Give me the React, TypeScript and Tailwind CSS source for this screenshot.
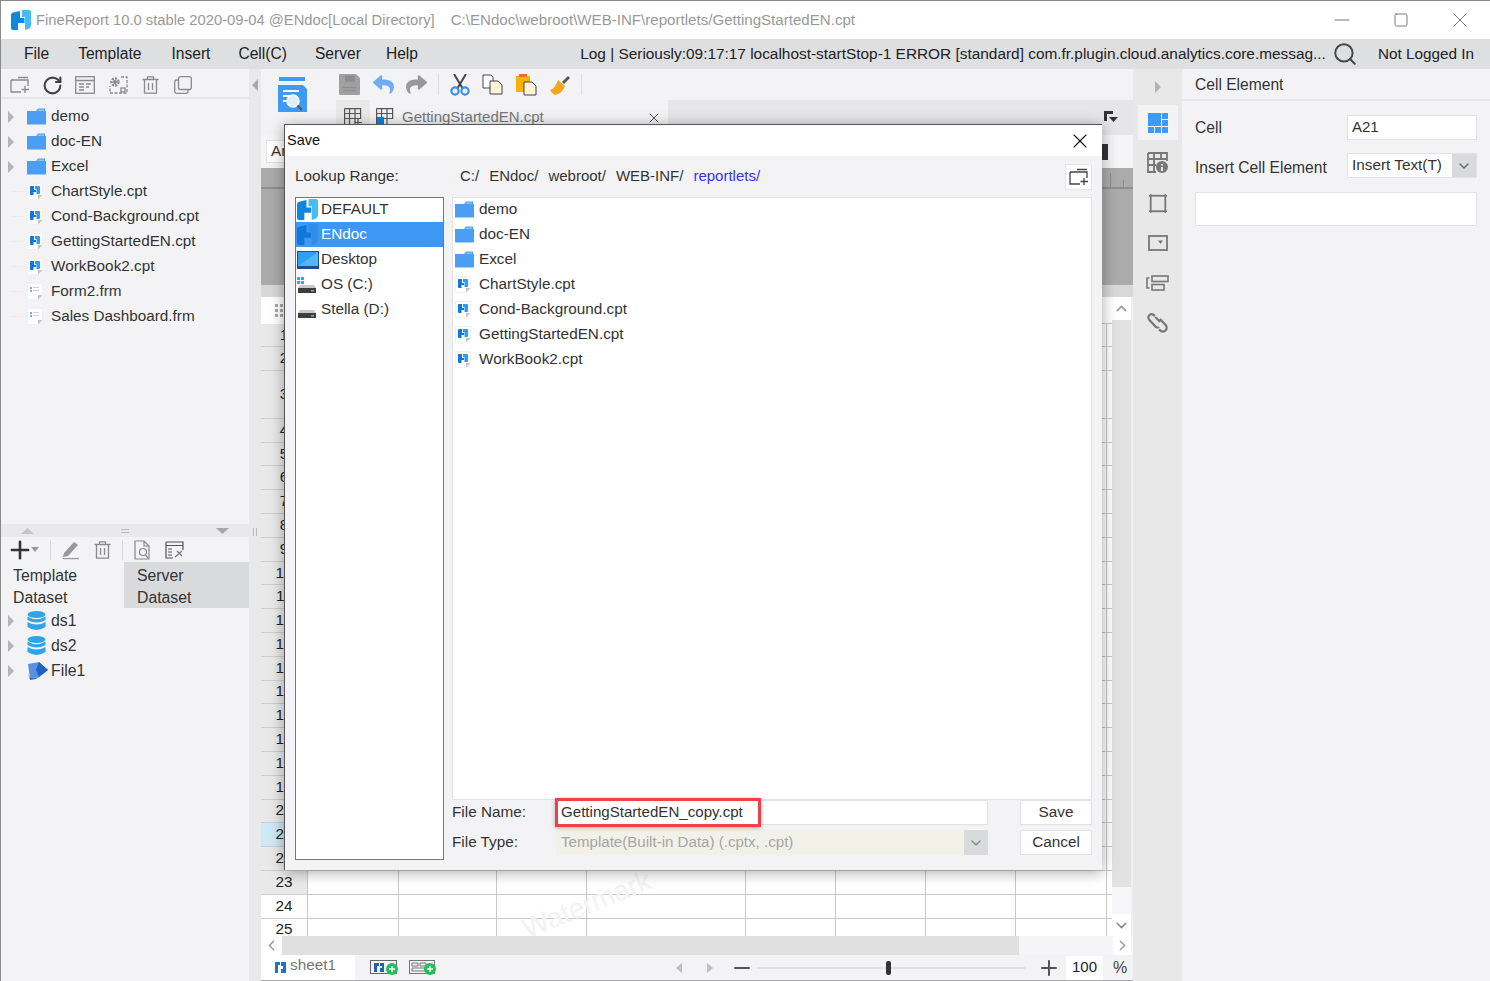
import { RotateCw, Search, Plus, Minus, X, ChevronDown, ChevronUp, ChevronLeft, ChevronRight, Square } from "lucide-react"
import { FaReply, FaShare } from "react-icons/fa"

function Logo({ size = 20, dim = false }: { size?: number; dim?: boolean }) {
  return (
    <svg width={size} height={size} viewBox="0 0 20 20" className="shrink-0">
      <path d="M11 0 H18 Q20 0 20 2 V15 Q20 18 17 19 L14 20 V7 H11 Z" fill={dim ? "#2f8fe8" : "#45bdf0"} />
      <path d="M0 5 Q0 3 2 2.500 L9 1 V8 H13.500 V13 H7 V20 H2 Q0 20 0 18 Z" fill={dim ? "#0f78d8" : "#0f86e0"} />
    </svg>
  )
}

function FolderIcon() {
  return (
    <svg width="19" height="17" viewBox="0 0 19 17" className="shrink-0">
      <path d="M0 3 H9 L11 0.5 H18 V3 H19 V16 Q19 16.5 18 16.5 H1 Q0 16.500 0 16 Z" fill="#4a9ff5" />
      <path d="M10 3 L11.5 1.5 H17 V3 Z" fill="#8cc4fa" />
    </svg>
  )
}

function PageIcon({ form = false }: { form?: boolean }) {
  return (
    <svg width="16" height="17" viewBox="0 0 16 17" className="shrink-0">
      <path d="M0.500 0.500 H15.500 V12 L11 16.500 H0.500 Z" fill="#fff" stroke="#f0f0f0" />
      <path d="M11 16.500 V12 H15.500 Z" fill="#c4c4c4" />
      {form ? (
        <g fill="#c3d4e3">
          <rect x="3" y="4" width="2" height="2" fill="#6fb2f5" />
          <rect x="6" y="4" width="6" height="1" />
          <rect x="3" y="7" width="2" height="2" fill="#6fb2f5" />
          <rect x="6" y="7" width="6" height="1" />
        </g>
      ) : (
        <g>
          <path d="M3 4 Q3 3 4 3 H7 V7 H9 V9 H6.500 V12 H4 Q3 12 3 11 Z" fill="#1278d8" />
          <path d="M8 3 H12 Q13 3 13 4 V10 Q13 11 12 11 H9.500 V6 H8 Z" fill="#2b9cf0" />
        </g>
      )}
    </svg>
  )
}

function Arrow() {
  return (
    <svg width="6" height="12" viewBox="0 0 6 12" className="shrink-0">
      <path d="M0 0 L6 6 L0 12 Z" fill="#b4b4b4" />
    </svg>
  )
}

function DbIcon() {
  return (
    <svg width="19" height="20" viewBox="0 0 19 20" className="shrink-0">
      <ellipse cx="9.5" cy="3.5" rx="9" ry="3.5" fill="#2fa4e6" />
      <path d="M0.5 5.5 Q9.5 11 18.5 5.5 V9 Q9.5 14 0.5 9 Z" fill="#2fa4e6" />
      <path d="M0.5 11 Q9.5 16 18.5 11 V16 Q9.5 22 0.5 16 Z" fill="#2fa4e6" />
    </svg>
  )
}

function FileBlockIcon() {
  return (
    <svg width="22" height="18" viewBox="0 0 22 18" className="shrink-0">
      <path d="M1 2 L12 0 L21 8 L12 15 L3 16 Z" fill="#5b8fe0" />
      <path d="M12 0 L21 8 L12 15 L9 8 Z" fill="#1f62c4" />
      <path d="M1 11 L3 16 L12 15 L9 17 L3 18 Z" fill="#2f6ec8" />
    </svg>
  )
}

function HardDrive({ win = false }: { win?: boolean }) {
  return (
    <svg width="20" height="18" viewBox="0 0 20 18" className="shrink-0">
      {win && (
        <g fill="#1fb0f0">
          <rect x="0" y="1" width="3" height="3" />
          <rect x="4" y="1" width="3" height="3" />
          <rect x="0" y="5" width="3" height="3" />
          <rect x="4" y="5" width="3" height="3" />
        </g>
      )}
      <path d="M3 9 H17 L19 12 H1 Z" fill="#c9c9c9" />
      <rect x="1" y="12" width="18" height="5" fill="#3d3d3d" />
      <rect x="14" y="14" width="3" height="1.5" fill="#4fd05a" />
    </svg>
  )
}

function DesktopIcon() {
  return (
    <svg width="22" height="18" viewBox="0 0 22 18" className="shrink-0">
      <rect x="0" y="0" width="22" height="18" fill="#1e4f8a" />
      <rect x="1" y="1" width="20" height="14" fill="#2ea0f2" />
      <path d="M1 15 L21 1 V15 Z" fill="#52b6fa" />
    </svg>
  )
}

function SaveFilled() {
  return (
    <svg width="21" height="21" viewBox="0 0 21 21">
      <path d="M1 0 H17 L21 4 V20 Q21 21 20 21 H1 Q0 21 0 20 V1 Q0 0 1 0 Z" fill="#a0a0a0" />
      <rect x="6" y="1.500" width="10" height="6" fill="#8c8c8c" />
      <rect x="4" y="13" width="13" height="1.200" fill="#8c8c8c" />
      <rect x="4" y="16" width="13" height="1.200" fill="#8c8c8c" />
    </svg>
  )
}

function NewFolderOutline() {
  return (
    <svg width="20" height="18" viewBox="0 0 20 18" fill="none" stroke="currentColor" strokeWidth="1.3">
      <path d="M1 4 H18 V10 M1 4 V16 H11" />
      <path d="M8 1.5 H18 M15 10 V17 M11.5 13.5 H19" />
    </svg>
  )
}

function ListBoxIcon() {
  return (
    <svg width="20" height="18" viewBox="0 0 20 18" fill="none" stroke="#8a8a8a" strokeWidth="1.3">
      <rect x="0.7" y="0.7" width="18.6" height="16.6" />
      <path d="M1 4.5 H19 M4 8 H9 M4 11 H9 M4 14 H9 M11 8 H16 M11 11 H14" />
    </svg>
  )
}

function GearIcon() {
  return (
    <svg width="20" height="18" viewBox="0 0 20 18" fill="none" stroke="#8a8a8a" strokeWidth="1.3">
      <path d="M13 1 H19 V17 H2 V10" strokeDasharray="3 1.5" />
      <circle cx="7" cy="6" r="3.5" strokeWidth="2.4" strokeDasharray="2 1.2" />
      <circle cx="7" cy="6" r="1.4" fill="#8a8a8a" />
      <rect x="13" y="12" width="4" height="4" />
    </svg>
  )
}

function TrashIcon() {
  return (
    <svg width="17" height="18" viewBox="0 0 17 18" fill="none" stroke="#8a8a8a" strokeWidth="1.3">
      <path d="M0.5 3.5 H16.5 M5.5 3.5 V0.8 H11.5 V3.5 M2.5 3.5 V17.2 H14.5 V3.5 M6.5 7 V14 M10.5 7 V14" />
    </svg>
  )
}

function CopyOutline() {
  return (
    <svg width="18" height="18" viewBox="0 0 18 18" fill="none" stroke="#8a8a8a" strokeWidth="1.3">
      <rect x="4.5" y="0.7" width="12.8" height="12.8" rx="2" />
      <path d="M4.5 4 H2.5 Q0.7 4 0.7 6 V15.5 Q0.7 17.3 2.5 17.3 H12 Q14 17.3 14 15.5 V13.5" />
    </svg>
  )
}

function ReportIcon() {
  return (
    <svg width="29" height="36" viewBox="0 0 29 36">
      <rect x="1" y="0" width="26" height="4" fill="#3d9bf5" />
      <path d="M0 8 H25 L29 12 V35 H0 Z" fill="#3d9bf5" />
      <path d="M5 13 H21 V15 H5 Z M5 18 H12 V20 H5 Z M5 23 H9 V25 H5 Z" fill="#fff" />
      <circle cx="15" cy="24" r="6" fill="#dceefc" stroke="#fff" strokeWidth="1.5" />
      <path d="M19.5 28.5 L24 33" stroke="#555" strokeWidth="2" />
    </svg>
  )
}

function ScissorsIcon() {
  return (
    <svg width="20" height="22" viewBox="0 0 20 22" fill="none">
      <path d="M4 0 L13 15 M16 0 L7 15" stroke="#444" strokeWidth="2" />
      <circle cx="5" cy="17" r="3.6" stroke="#3d8ee8" strokeWidth="2.2" />
      <circle cx="15" cy="17" r="3.6" stroke="#3d8ee8" strokeWidth="2.2" />
    </svg>
  )
}

function CopyDocs() {
  return (
    <svg width="21" height="21" viewBox="0 0 21 21">
      <path d="M1 1 H9 L11 3 V14 H1 Z" fill="#fff" stroke="#444" />
      <path d="M8 7 H16 L20 11 V20 H8 Z" fill="#fdf3d8" stroke="#444" />
    </svg>
  )
}

function PasteDocs() {
  return (
    <svg width="21" height="22" viewBox="0 0 21 22">
      <rect x="0" y="2" width="14" height="16" fill="#f5b400" />
      <rect x="3" y="0" width="8" height="3" fill="#e86a3a" />
      <path d="M8 8 H16 L20 12 V21 H8 Z" fill="#fdf3d8" stroke="#444" />
    </svg>
  )
}

function BroomIcon() {
  return (
    <svg width="20" height="20" viewBox="0 0 20 20">
      <path d="M12 7 L18 1 L20 3 L14 9 Z" fill="#555" />
      <path d="M8 5 L15 11 Q13 18 5 20 Q2 19 0 15 Q5 14 8 5 Z" fill="#f0a820" />
    </svg>
  )
}

function GridPlus({ mark = false }: { mark?: boolean }) {
  return (
    <svg width="18" height="18" viewBox="0 0 18 18" fill="none" stroke="#555" strokeWidth="1.2">
      <path d="M0.6 0.6 H16.6 V11 M0.6 0.6 V16.6 H9 M0.6 5.5 H16.6 M0.6 10.5 H16.6 M5.5 0.6 V16.6 M11 0.6 V16.6" />
      {mark ? <rect x="1" y="9" width="7" height="8" fill="#1280dc" stroke="none" /> : <path d="M14 11 V18 M10.5 14.5 H18" />}
    </svg>
  )
}

function SidebarIcons() {
  return (
    <div className="w-[49px] shrink-0 bg-[#e8e8e8] flex flex-col items-center">
      <div className="h-[36px] flex items-center justify-center">
        <Arrow />
      </div>
      <div className="w-[40px] h-[35px] bg-[#f3f3f5] flex items-center justify-center">
        <svg width="20" height="20" viewBox="0 0 20 20" fill="#3d9bf5">
          <rect x="0" y="0" width="13" height="13" />
          <rect x="14" y="0" width="6" height="6" />
          <rect x="14" y="7" width="6" height="6" />
          <rect x="0" y="14" width="6" height="6" />
          <rect x="7" y="14" width="6" height="6" />
          <rect x="14" y="14" width="6" height="6" />
        </svg>
      </div>
      <div className="mt-[3px] flex flex-col items-center">
        <div className="h-[40px] flex items-center">
          <svg width="21" height="22" viewBox="0 0 21 22" fill="none" stroke="#777" strokeWidth="1.8">
            <path d="M1 1 H20 V9 M1 1 V20 H9 M1 7 H20 M1 13 H9 M7 1 V20 M14 1 V8" />
            <circle cx="15" cy="15" r="6" fill="#777" stroke="none" />
            <path d="M15 12 V13.5 M15 15 V19" stroke="#fff" strokeWidth="1.6" />
          </svg>
        </div>
        <div className="h-[40px] flex items-center">
          <svg width="20" height="21" viewBox="0 0 20 23" fill="none" stroke="#777" strokeWidth="2">
            <rect x="2" y="3" width="16" height="17" />
            <path d="M0 3 H3 M17 3 H20 M0 20 H3 M17 20 H20 M2 1 V4 M18 1 V4 M2 19 V22 M18 19 V22" strokeWidth="1.4" />
          </svg>
        </div>
        <div className="h-[40px] flex items-center">
          <svg width="20" height="16" viewBox="0 0 20 16" fill="none" stroke="#777" strokeWidth="1.8">
            <rect x="1" y="1" width="18" height="14" />
            <path d="M10 5.5 H15 L12.5 9 Z" fill="#777" stroke="none" />
          </svg>
        </div>
        <div className="h-[40px] flex items-center">
          <svg width="23" height="16" viewBox="0 0 23 16" fill="none" stroke="#777" strokeWidth="1.6">
            <rect x="6" y="1" width="16" height="5.5" />
            <rect x="6" y="9.5" width="12" height="5.5" />
            <path d="M3.5 3 H1 V13 H3.5" />
          </svg>
        </div>
        <div className="h-[40px] flex items-center">
          <svg width="21" height="20" viewBox="0 0 21 20" fill="none" stroke="#777" strokeWidth="2.2">
            <path d="M8 3 L6 1.500 Q4 0.500 2.500 2 Q0.500 4 2 6.500 L9 14 Q11 15 12 14" />
            <path d="M13 6 L19 12.500 Q20.500 15.500 18.500 17.500 Q16.500 19.500 14 18 L12 16.500 M8 5 Q9 4.500 10 5.500 L13 9" />
          </svg>
        </div>
      </div>
    </div>
  )
}

const tree = [
  { name: "demo", kind: "folder" },
  { name: "doc-EN", kind: "folder" },
  { name: "Excel", kind: "folder" },
  { name: "ChartStyle.cpt", kind: "cpt" },
  { name: "Cond-Background.cpt", kind: "cpt" },
  { name: "GettingStartedEN.cpt", kind: "cpt" },
  { name: "WorkBook2.cpt", kind: "cpt" },
  { name: "Form2.frm", kind: "frm" },
  { name: "Sales Dashboard.frm", kind: "frm" },
]

function LeftPanel() {
  return (
    <div className="w-[248px] shrink-0 flex flex-col">
      <div className="flex-1">
        <div className="h-[30px] border-b-2 border-[#e6e6e8] flex items-center pt-[4px] pl-[3px] text-[#8a8a8a]">
          <div className="w-[32.500px] flex justify-center"><NewFolderOutline /></div>
          <div className="w-[32.500px] flex justify-center"><RotateCw size={21} strokeWidth={2.4} className="text-[#444]" /></div>
          <div className="w-[32.500px] flex justify-center"><ListBoxIcon /></div>
          <div className="w-[32.500px] flex justify-center"><GearIcon /></div>
          <div className="w-[32.500px] flex justify-center"><TrashIcon /></div>
          <div className="w-[32.500px] flex justify-center"><CopyOutline /></div>
        </div>
        <div className="pt-[5px]">
          {tree.map((t) => (
            <div key={t.name} className="h-[25px] flex items-center">
              <div className="w-[26px] pl-[7px] flex items-center">
                {t.kind === "folder" ? <Arrow /> : <div className="ml-[3px] w-[12px] h-px bg-[#ebebed]" />}
              </div>
              <div className="w-[24px] flex justify-start">
                {t.kind === "folder" ? <FolderIcon /> : <PageIcon form={t.kind === "frm"} />}
              </div>
              <span>{t.name}</span>
            </div>
          ))}
        </div>
      </div>
      <div className="h-[457px] shrink-0 flex flex-col">
        <div className="h-[13px] bg-[#e9e9eb] flex items-center justify-between px-[20px]">
          <svg width="13" height="6" viewBox="0 0 13 6"><path d="M0 6 L6.5 0 L13 6 Z" fill="#c4c4c4" /></svg>
          <div className="w-[8px] h-[4px] border-y border-[#bbb]" />
          <svg width="13" height="6" viewBox="0 0 13 6"><path d="M0 0 L6.5 6 L13 0 Z" fill="#a8a8a8" /></svg>
        </div>
        <div className="h-[25px] flex items-center pl-[8px]">
          <Plus size={28} strokeWidth={2.2} className="text-[#333] -mx-[3px]" />
          <svg width="8" height="5" viewBox="0 0 8 5"><path d="M0 0 H8 L4 5 Z" fill="#999" /></svg>
          <div className="w-px h-[20px] bg-[#d8d8d8] ml-[11px]" />
          <svg width="20" height="20" viewBox="0 0 20 20" className="ml-[10px]">
            <path d="M3 13 L13 2 L17 5 L7 16 L2 17 Z" fill="#999" />
            <rect x="2" y="18" width="16" height="1.2" fill="#999" />
          </svg>
          <div className="ml-[13px]"><TrashIcon /></div>
          <div className="w-px h-[20px] bg-[#d8d8d8] ml-[11px]" />
          <svg width="16" height="20" viewBox="0 0 16 20" fill="none" stroke="#888" strokeWidth="1.2" className="ml-[11px]">
            <path d="M1 1 H10 L15 6 V19 H1 Z M10 1 V6 H15" />
            <circle cx="9" cy="12" r="3.5" />
            <path d="M11.5 15 L14 18" />
          </svg>
          <svg width="19" height="18" viewBox="0 0 19 18" fill="none" stroke="#555" strokeWidth="1.2" className="ml-[15px]">
            <path d="M1 1 H18 V9 M1 1 V17 H8 M1 4.5 H18 M3 8 H7 M3 11 H7 M3 14 H7" />
            <path d="M10 16 L17 10 M12 10 L17 15" stroke="#777" />
          </svg>
        </div>
        <div className="flex h-[46px] leading-[22px] text-[15.800px]">
          <div className="w-[123px] pl-[12px] pt-[3px]">Template<br />Dataset</div>
          <div className="w-[125px] pl-[13px] pt-[3px] bg-[#d9dadc]">Server<br />Dataset</div>
        </div>
        {[
          { name: "ds1", icon: <DbIcon /> },
          { name: "ds2", icon: <DbIcon /> },
          { name: "File1", icon: <FileBlockIcon /> },
        ].map((d) => (
          <div key={d.name} className="h-[25px] flex items-center">
            <div className="w-[26px] pl-[7px] flex"><Arrow /></div>
            <div className="w-[24px] flex">{d.icon}</div>
            <span className="text-[15.800px]">{d.name}</span>
          </div>
        ))}
      </div>
    </div>
  )
}

const colWidths = ["w-[91px]", "w-[98px]", "w-[90px]", "w-[159px]", "w-[90px]", "w-[90px]", "w-[90px]", "w-[91px]"]

function GridRow({ n, selected }: { n: number; selected?: boolean }) {
  const tall = n === 3
  const headBg = selected ? "bg-[#cfe8f7]" : n <= 23 ? "bg-[#e9e9e9]" : "bg-white"
  return (
    <div className={`${tall ? "h-[47.6px]" : "h-[23.8px]"} flex shrink-0`}>
      <div className={`w-[46px] shrink-0 ${headBg} border-b border-[#cfcfcf] flex items-center justify-center text-[#222]`}>{n}</div>
      {colWidths.map((w, i) => (
        <div key={i} className={`${w} shrink-0 border-l border-b border-[#c8c8c8] bg-white`} />
      ))}
      <div className="flex-1 border-l border-b border-[#c8c8c8] bg-white" />
    </div>
  )
}

function Center() {
  const rows = Array.from({ length: 25 }, (_, i) => i + 1)
  return (
    <div className="w-[872px] shrink-0 flex flex-col">
      <div className="h-[66px] shrink-0 flex bg-[#f3f3f5]">
        <div className="w-[75px] pl-[17px] pt-[8px]"><ReportIcon /></div>
        <div className="flex-1 flex flex-col">
          <div className="h-[31px] flex items-center">
            <div className="ml-[3px]"><SaveFilled /></div>
            <FaReply size={21} className="ml-[13px] text-[#6eaef0]" />
            <FaShare size={21} className="ml-[12px] text-[#999]" />
            <div className="w-px h-[21px] bg-[#ddd] ml-[11px]" />
            <div className="ml-[11px]"><ScissorsIcon /></div>
            <div className="ml-[12px]"><CopyDocs /></div>
            <div className="ml-[13px]"><PasteDocs /></div>
            <div className="ml-[13px]"><BroomIcon /></div>
            <div className="w-px h-[21px] bg-[#ddd] ml-[11px]" />
          </div>
          <div className="flex-1 bg-[#e6e6e8] flex items-start">
            <div className="w-[34px] h-full bg-[#e9e9e9] flex justify-center pt-[8px]"><GridPlus /></div>
            <div className="w-[298px] h-full bg-[#f3f3f5] flex pl-[6px] pr-[6px] pt-[8px] gap-[8px] text-[#777] text-[15px]">
              <GridPlus mark />
              <span className="leading-[18px]">GettingStartedEN.cpt</span>
              <X size={16} strokeWidth={1.5} className="ml-auto mt-[2px] text-[#555]" />
            </div>
            <svg width="14" height="14" viewBox="0 0 14 14" className="ml-[436px] mt-[11px]">
              <path d="M0 0 H9 V3 H3 V10 H0 Z" fill="#333" />
              <path d="M5 6 H14 L9.500 11 Z" fill="#333" />
            </svg>
          </div>
        </div>
      </div>
      <div className="h-[33px] shrink-0 bg-[#f5f5f7] flex items-center pl-[5px]">
        <div className="w-[60px] h-[23px] bg-white border border-[#e2e2e2] flex items-center pl-[4px] text-[#333]">Ar</div>
        <div className="ml-[776px] w-[6px] h-[16px] bg-[#333]" />
      </div>
      <div className="h-[117px] shrink-0 bg-[#ababab] flex flex-col">
        <div className="h-[21px] border-b-2 border-[#8f8f8f] flex items-end justify-end pr-[9px] gap-[12px]">
          <div className="w-px h-[14px] bg-[#8f8f8f]" />
          <div className="w-px h-[7px] bg-[#8f8f8f]" />
        </div>
      </div>
      <div className="h-[12px] shrink-0 bg-[#d8d8d8]" />
      <div className="flex-1 flex min-h-0">
        <div className="w-[851px] overflow-hidden flex flex-col relative">
          <div className="h-[26.600px] flex shrink-0">
            <div className="w-[46px] bg-white flex items-center pl-[14px]">
              <div className="grid grid-cols-2 gap-[2px]">
                {[0, 1, 2, 3, 4, 5].map((d) => <div key={d} className="w-[3px] h-[3px] bg-[#a8a8a8]" />)}
              </div>
            </div>
            <div className="flex-1 bg-white border-b border-[#c8c8c8]" />
          </div>
          {rows.map((n) => <GridRow key={n} n={n} selected={n === 21} />)}
          <span className="absolute left-[258px] top-[594px] -rotate-[22deg] text-[28px] leading-none text-[#f3f3f3]">Watermark</span>
        </div>
        <div className="w-[19px] flex flex-col bg-white">
          <div className="h-[23px] flex items-center justify-center"><ChevronUp size={17} className="text-[#999]" /></div>
          <div className="h-[567px] bg-[#e2e2e2]" />
          <div className="flex-1 bg-[#f6f6f8]" />
          <div className="h-[22px] bg-white flex items-center justify-center"><ChevronDown size={17} className="text-[#888]" /></div>
        </div>
        <div className="w-[2px] bg-[#f0f0f2]" />
      </div>
      <div className="h-[19px] shrink-0 flex bg-[#f5f5f7]">
        <div className="w-[21px] bg-white flex items-center justify-center"><ChevronLeft size={17} className="text-[#999]" /></div>
        <div className="w-[737px] bg-[#e0e0e0]" />
        <div className="w-[94px]" />
        <div className="w-[18px] bg-white flex items-center justify-center"><ChevronRight size={17} className="text-[#999]" /></div>
      </div>
      <div className="h-[26px] shrink-0 bg-[#f3f3f5] border-b border-[#aaa] flex items-center text-[#777]">
        <div className="w-[94px] h-[25px] bg-white flex items-center pl-[14px] gap-[4px]">
          <svg width="11" height="11" viewBox="0 0 11 11"><path d="M0 0 H5 V3 H3 V11 H0 Z M6 0 H11 V11 H6 V7 H8 V4 H6 Z" fill="#1a76c8" /></svg>
          <span className="leading-none -mt-[5px]">sheet1</span>
        </div>
        <svg width="29" height="15" viewBox="0 0 29 15" className="ml-[15px]">
          <rect x="0.5" y="0.5" width="26" height="13" fill="none" stroke="#666" />
          <path d="M4 3 H9 V6 H7 V12 H4 Z M10 3 H14 V12 H10 V8 H12 V6 H10 Z" fill="#1f62b8" />
          <circle cx="22" cy="9" r="6" fill="#22bf5a" />
          <path d="M22 6 V12 M19 9 H25" stroke="#fff" strokeWidth="1.5" />
        </svg>
        <svg width="28" height="15" viewBox="0 0 28 15" className="ml-[10px]">
          <rect x="0.5" y="0.500" width="25" height="13" fill="none" stroke="#777" />
          <path d="M3 3 H9 V6 H3 Z M11 3 H17 V6 H11 Z M3 8 H17 V11 H3 Z" fill="none" stroke="#777" />
          <circle cx="21" cy="9" r="6" fill="#22bf5a" />
          <path d="M21 6 V12 M18 9 H24" stroke="#fff" strokeWidth="1.5" />
        </svg>
        <svg width="6" height="10" viewBox="0 0 6 10" className="ml-[239px]"><path d="M6 0 L0 5 L6 10 Z" fill="#c0c0c0" /></svg>
        <svg width="6" height="10" viewBox="0 0 6 10" className="ml-[25px]"><path d="M0 0 L6 5 L0 10 Z" fill="#c0c0c0" /></svg>
        <Minus size={24} className="ml-[17px] text-[#555]" />
        <div className="ml-[3px] w-[268px] h-[2px] bg-[#e0e0e0] relative">
          <div className="absolute left-[129px] -top-[6px] w-[5px] h-[14px] rounded-[2px] bg-[#333]" />
        </div>
        <Plus size={24} className="ml-[12px] text-[#555]" />
        <div className="ml-[5px] w-[37px] h-[24px] bg-white flex items-center justify-center text-[#222] text-[15px]">100</div>
        <span className="ml-[10px] text-[#444] text-[16px]">%</span>
      </div>
    </div>
  )
}

function RightPanel() {
  return (
    <div className="flex-1 flex flex-col text-[15.600px]">
      <div className="h-[32px] border-b-2 border-[#e8e8e8] flex items-center pl-[13px] pt-[2px]">Cell Element</div>
      <div className="px-[13px] pt-[14px]">
        <div className="flex items-center justify-between h-[25px]">
          <span>Cell</span>
          <div className="w-[130px] h-[25px] bg-white border border-[#e2e2e2] pl-[4px] flex items-center text-[15px]">A21</div>
        </div>
        <div className="flex items-center justify-between h-[25px] mt-[13px]">
          <span className="pt-[4px]">Insert Cell Element</span>
          <div className="w-[130px] h-[25px] bg-white border border-[#e2e2e2] pl-[4px] flex items-center justify-between">
            <span className="text-[15.300px]">Insert Text(T)</span>
            <div className="w-[24px] h-full bg-[#d9dadc] flex items-center justify-center"><ChevronDown size={16} className="text-[#666]" /></div>
          </div>
        </div>
        <div className="h-[34px] mt-[14px] bg-white border border-[#e2e2e2]" />
      </div>
    </div>
  )
}

const places = [
  { name: "DEFAULT", icon: <Logo size={21} /> },
  { name: "ENdoc", icon: <Logo size={21} dim />, active: true },
  { name: "Desktop", icon: <DesktopIcon /> },
  { name: "OS (C:)", icon: <HardDrive win /> },
  { name: "Stella (D:)", icon: <HardDrive /> },
]

function SaveDialog() {
  return (
    <div className="absolute left-[283px] top-[123px] w-[818px] h-[746px] bg-[#f3f3f5] border-t border-l border-[#555] shadow-[0_2px_14px_rgba(0,0,0,0.35)] flex flex-col">
      <div className="h-[31px] shrink-0 bg-white flex items-center justify-between pl-[2px] pr-[13px] text-[#111]">
        <span className="text-[14.500px]">Save</span>
        <X size={24} strokeWidth={1.1} className="text-[#111] -mr-[3px]" />
      </div>
      <div className="pl-[10px] pr-[10px]">
        <div className="h-[41px] flex items-center">
          <span className="w-[165px]">Lookup Range:</span>
          <div className="flex gap-[10px] flex-1 text-[15px]">
            <span>C:/</span>
            <span>ENdoc/</span>
            <span>webroot/</span>
            <span>WEB-INF/</span>
            <span className="text-[#3333ee]">reportlets/</span>
          </div>
          <div className="w-[27px] h-[26px] bg-white border border-[#e6e6e6] flex items-center justify-center text-[#444]"><NewFolderOutline /></div>
        </div>
        <div className="flex gap-[8px]">
          <div className="w-[150px] h-[663px] bg-white border border-[#777]">
            <div className="-mt-px">
              {places.map((p) => (
                <div key={p.name} className={`h-[25px] flex items-center ${p.active ? "bg-[#3f97f5] text-white" : ""}`}>
                  <div className="w-[25px] pl-[1px] flex">{p.icon}</div>
                  <span>{p.name}</span>
                </div>
              ))}
            </div>
          </div>
          <div className="flex-1">
            <div className="h-[603px] bg-white border border-[#e2e2e2]">
              <div className="-mt-px">
                {tree.slice(0, 7).map((t) => (
                  <div key={t.name} className="h-[25px] flex items-center">
                    <div className="w-[26px] pl-[2px] flex">
                      {t.kind === "folder" ? <FolderIcon /> : <PageIcon />}
                    </div>
                    <span>{t.name}</span>
                  </div>
                ))}
              </div>
            </div>
            <div className="flex items-center h-[25px]">
              <span className="w-[103px]">File Name:</span>
              <div className="w-[433px] h-[25px] bg-white border border-[#e2e2e2] pl-[5px] flex items-center relative text-[15.100px]">
                GettingStartedEN_copy.cpt
                <div className="absolute -left-[1px] -top-[3px] w-[206px] h-[29px] border-[3px] border-[#f04048] shadow-[0_1px_4px_rgba(0,0,0,0.3)]" />
              </div>
              <div className="ml-[32px] w-[72px] h-[25px] bg-white border border-[#e2e2e2] flex items-center justify-center">Save</div>
            </div>
            <div className="flex items-center h-[25px] mt-[5px]">
              <span className="w-[104px]">File Type:</span>
              <div className="w-[432px] h-[25px] bg-[#f1f1e8] pl-[5px] flex items-center justify-between text-[#a5a5a5] text-[15.100px]">
                <span>Template(Built-in Data) (.cptx, .cpt)</span>
                <div className="w-[24px] h-full bg-[#d9dadc] flex items-center justify-center"><ChevronDown size={16} className="text-[#888]" /></div>
              </div>
              <div className="ml-[32px] w-[72px] h-[25px] bg-white border border-[#e2e2e2] flex items-center justify-center">Cancel</div>
            </div>
          </div>
        </div>
      </div>
    </div>
  )
}

export default function App() {
  return (
    <div className="w-[1490px] h-[981px] relative overflow-hidden flex flex-col border-t border-l border-[#8a8a8a] bg-[#f3f3f5] text-[15.300px] text-[#333] [font-family:'Liberation_Sans',Arial,sans-serif]">
      <div className="h-[38px] shrink-0 bg-white flex items-center pl-[10px] text-[#999]">
        <Logo />
        <span className="ml-[5px] text-[14.750px]">FineReport 10.0 stable 2020-09-04 @ENdoc[Local Directory]</span>
        <span className="ml-[16px] text-[15.100px]">C:\ENdoc\webroot\WEB-INF\reportlets/GettingStartedEN.cpt</span>
        <div className="ml-auto flex items-center pr-[18px] gap-[35px] text-[#666]">
          <Minus size={24} strokeWidth={0.9} />
          <Square size={16} strokeWidth={1.3} className="mx-[4px]" />
          <X size={24} strokeWidth={0.9} />
        </div>
      </div>
      <div className="h-[30px] shrink-0 bg-[#dedfe1] flex items-center pl-[23px] pr-[16px] text-[#222] text-[15.600px]">
        <div className="flex gap-[28px]">
          <span>File</span>
          <span className="ml-[1px]">Template</span>
          <span className="ml-[2px]">Insert</span>
          <span>Cell(C)</span>
          <span>Server</span>
          <span className="-ml-[3px]">Help</span>
        </div>
        <span className="ml-auto whitespace-nowrap text-[15.400px]">Log | Seriously:09:17:17 localhost-startStop-1 ERROR [standard] com.fr.plugin.cloud.analytics.core.messag...</span>
        <Search size={26} strokeWidth={1.8} className="ml-[6px] text-[#444]" />
        <span className="ml-[20px] text-[15.300px]">Not Logged In</span>
      </div>
      <div className="flex-1 flex min-h-0">
        <LeftPanel />
        <div className="w-[12px] shrink-0 bg-[#e9e9e9] flex flex-col items-center pt-[10px]">
          <svg width="6" height="12" viewBox="0 0 6 12"><path d="M6 0 L0 6 L6 12 Z" fill="#aaa" /></svg>
          <div className="mt-[437px] w-[4px] h-[8px] border-x border-[#bbb]" />
        </div>
        <Center />
        <SidebarIcons />
        <RightPanel />
      </div>
      <SaveDialog />
    </div>
  )
}
